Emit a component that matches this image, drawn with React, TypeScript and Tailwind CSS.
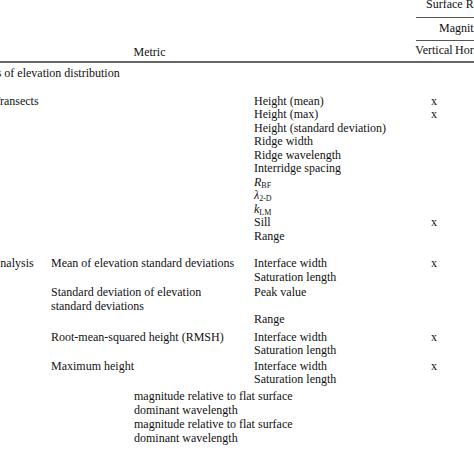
import React from "react";

const C0 = "w-[165px] shrink-0";
const C1 = "w-[203px] shrink-0";
const C2 = "w-[159px] shrink-0";
const C3 = "w-[42px] shrink-0 text-center";

function Lines({ items }: { items: React.ReactNode[] }) {
  return (
    <div className="flex flex-col">
      {items.map((t, i) => (
        <div key={i} className="h-[13.5px] whitespace-nowrap">
          {t}
        </div>
      ))}
    </div>
  );
}

export default function App() {
  return (
    <div className="w-[474px] h-[474px] overflow-hidden bg-white text-[#111] font-['Liberation_Serif',serif] text-[12px] leading-[13.5px]">
      <div className="w-[700px] -ml-[114px]">
        {/* header */}
        <div className="flex h-[61px]">
          <div className="w-[527px] shrink-0 flex items-end justify-center pb-[2px]">Metric</div>
          <div className="w-[200px] shrink-0 flex flex-col">
            <div className="-mt-[2px] pl-[13px] whitespace-nowrap">Surface Roughness</div>
            <div className="mt-[5px] ml-[3px] h-px bg-[#555]"></div>
            <div className="mt-[4px] pl-[26px] whitespace-nowrap">Magnitude</div>
            <div className="mt-[5px] ml-[3px] h-px bg-[#555]"></div>
            <div className="mt-[3px] flex whitespace-nowrap">
              <div className="w-[42px] text-center">Vertical</div>
              <div>Horizontal</div>
            </div>
          </div>
        </div>
        <div className="h-[2px] bg-[#666]"></div>

        {/* body */}
        <div className="mt-[4px] pl-[72px] whitespace-nowrap">Statistics of elevation distribution</div>

        <div className="mt-[14px] flex">
          <div className={`${C0} pl-[107px]`}>Transects</div>
          <div className={C1}></div>
          <div className={C2}>
            <Lines
              items={[
                "Height (mean)",
                "Height (max)",
                "Height (standard deviation)",
                "Ridge width",
                "Ridge wavelength",
                "Interridge spacing",
                <span>
                  <i>R</i>
                  <sub className="text-[8px] align-baseline relative top-[2px]">BF</sub>
                </span>,
                <span>
                  <i>λ</i>
                  <sub className="text-[8px] align-baseline relative top-[2px]">2-D</sub>
                </span>,
                <span>
                  <i>k</i>
                  <sub className="text-[8px] align-baseline relative top-[2px]">LM</sub>
                </span>,
                "Sill",
                "Range",
              ]}
            />
          </div>
          <div className={C3}>
            <Lines items={["x", "x", "", "", "", "", "", "", "", "x", ""]} />
          </div>
        </div>

        <div className="mt-[14px] flex">
          <div className={`${C0} pl-[80px] whitespace-nowrap`}>Scale analysis</div>
          <div className={C1}>
            <Lines items={["Mean of elevation standard deviations"]} />
          </div>
          <div className={C2}>
            <Lines items={["Interface width", "Saturation length"]} />
          </div>
          <div className={C3}>x</div>
        </div>

        <div className="mt-[2px] flex">
          <div className={C0}></div>
          <div className={C1}>
            <Lines items={["Standard deviation of elevation", "standard deviations"]} />
          </div>
          <div className={C2}>
            <Lines items={["Peak value", "", "Range"]} />
          </div>
          <div className={C3}></div>
        </div>

        <div className="mt-[4px] flex">
          <div className={C0}></div>
          <div className={C1}>
            <Lines items={["Root-mean-squared height (RMSH)"]} />
          </div>
          <div className={C2}>
            <Lines items={["Interface width", "Saturation length"]} />
          </div>
          <div className={C3}>x</div>
        </div>

        <div className="mt-[2px] flex">
          <div className={C0}></div>
          <div className={C1}>
            <Lines items={["Maximum height"]} />
          </div>
          <div className={C2}>
            <Lines items={["Interface width", "Saturation length"]} />
          </div>
          <div className={C3}>x</div>
        </div>

        <div className="mt-[2px] pl-[248px] flex flex-col leading-[14px]">
          <div className="whitespace-nowrap">magnitude relative to flat surface</div>
          <div className="whitespace-nowrap">dominant wavelength</div>
          <div className="whitespace-nowrap">magnitude relative to flat surface</div>
          <div className="whitespace-nowrap">dominant wavelength</div>
        </div>
      </div>
    </div>
  );
}
